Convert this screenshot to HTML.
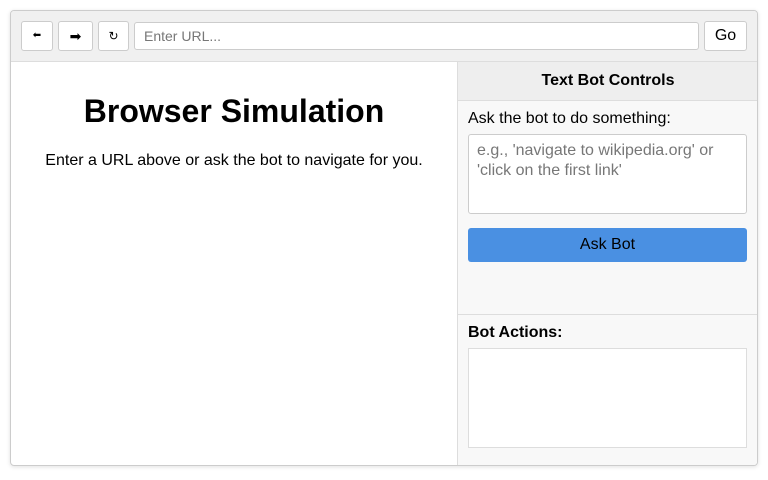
<!DOCTYPE html><html><head><style>
body{margin:0;background:#fff;font-family:"Liberation Sans",sans-serif;}
.c{position:absolute;left:10px;top:10px;width:746px;height:454px;border:1px solid #ccc;border-radius:4px;box-shadow:0 1px 4px rgba(0,0,0,.12);overflow:hidden;}
.tb{position:absolute;left:0;top:0;width:746px;height:50px;background:#f0f0f0;border-bottom:1px solid #ddd;}
.b{position:absolute;top:10px;height:28px;background:#fff;border:1px solid #ccc;border-radius:3px;font-size:14px;text-align:center;line-height:28px;box-sizing:content-box}
.u{position:absolute;left:123px;top:11px;background:#fff;border:1px solid #ccc;border-radius:3px;color:#777;font-size:14px;line-height:26px;padding-left:9px;box-sizing:border-box;width:565px;height:28px}
.l{position:absolute;left:0;top:51px;width:446px;height:403px;text-align:center}
.r{position:absolute;left:446px;top:51px;width:300px;height:403px;background:#f8f8f8;border-left:1px solid #ddd}
</style></head><body><div class="c">
<div class="tb">
<div class="b" style="left:10px;width:30px;font-size:10px">⬅</div>
<div class="b" style="left:47px;width:33px">➡</div>
<div class="b" style="left:87px;width:29px;font-size:12px">↻</div>
<div class="u">Enter URL...</div>
<div class="b" style="left:693px;width:41px;font-size:16px">Go</div>
</div>
<div class="l"><div style="font-size:32px;font-weight:bold;margin-top:31px">Browser Simulation</div>
<div style="font-size:16px;margin-top:22px">Enter a URL above or ask the bot to navigate for you.</div></div>
<div class="r">
<div style="height:38px;background:#eee;border-bottom:1px solid #ddd;text-align:center;font-weight:bold;font-size:16px;line-height:38px">Text Bot Controls</div>
<div style="position:absolute;left:10px;top:48px;font-size:16px">Ask the bot to do something:</div>
<div style="position:absolute;left:10px;top:72px;width:279px;height:80px;background:#fff;border:1px solid #ccc;border-radius:3px;box-sizing:border-box;padding:6px 8px;color:#777;font-size:16px;line-height:20px">e.g., 'navigate to wikipedia.org' or 'click on the first link'</div>
<div style="position:absolute;left:10px;top:166px;width:279px;height:34px;background:#4a90e2;border-radius:3px;text-align:center;line-height:34px;font-size:16px">Ask Bot</div>
<div style="position:absolute;left:0;top:252px;width:300px;border-top:1px solid #ddd"></div>
<div style="position:absolute;left:10px;top:262px;font-size:16px;font-weight:bold">Bot Actions:</div>
<div style="position:absolute;left:10px;top:286px;width:279px;height:100px;background:#fff;border:1px solid #ddd;box-sizing:border-box"></div>
</div>
</div></body></html>
